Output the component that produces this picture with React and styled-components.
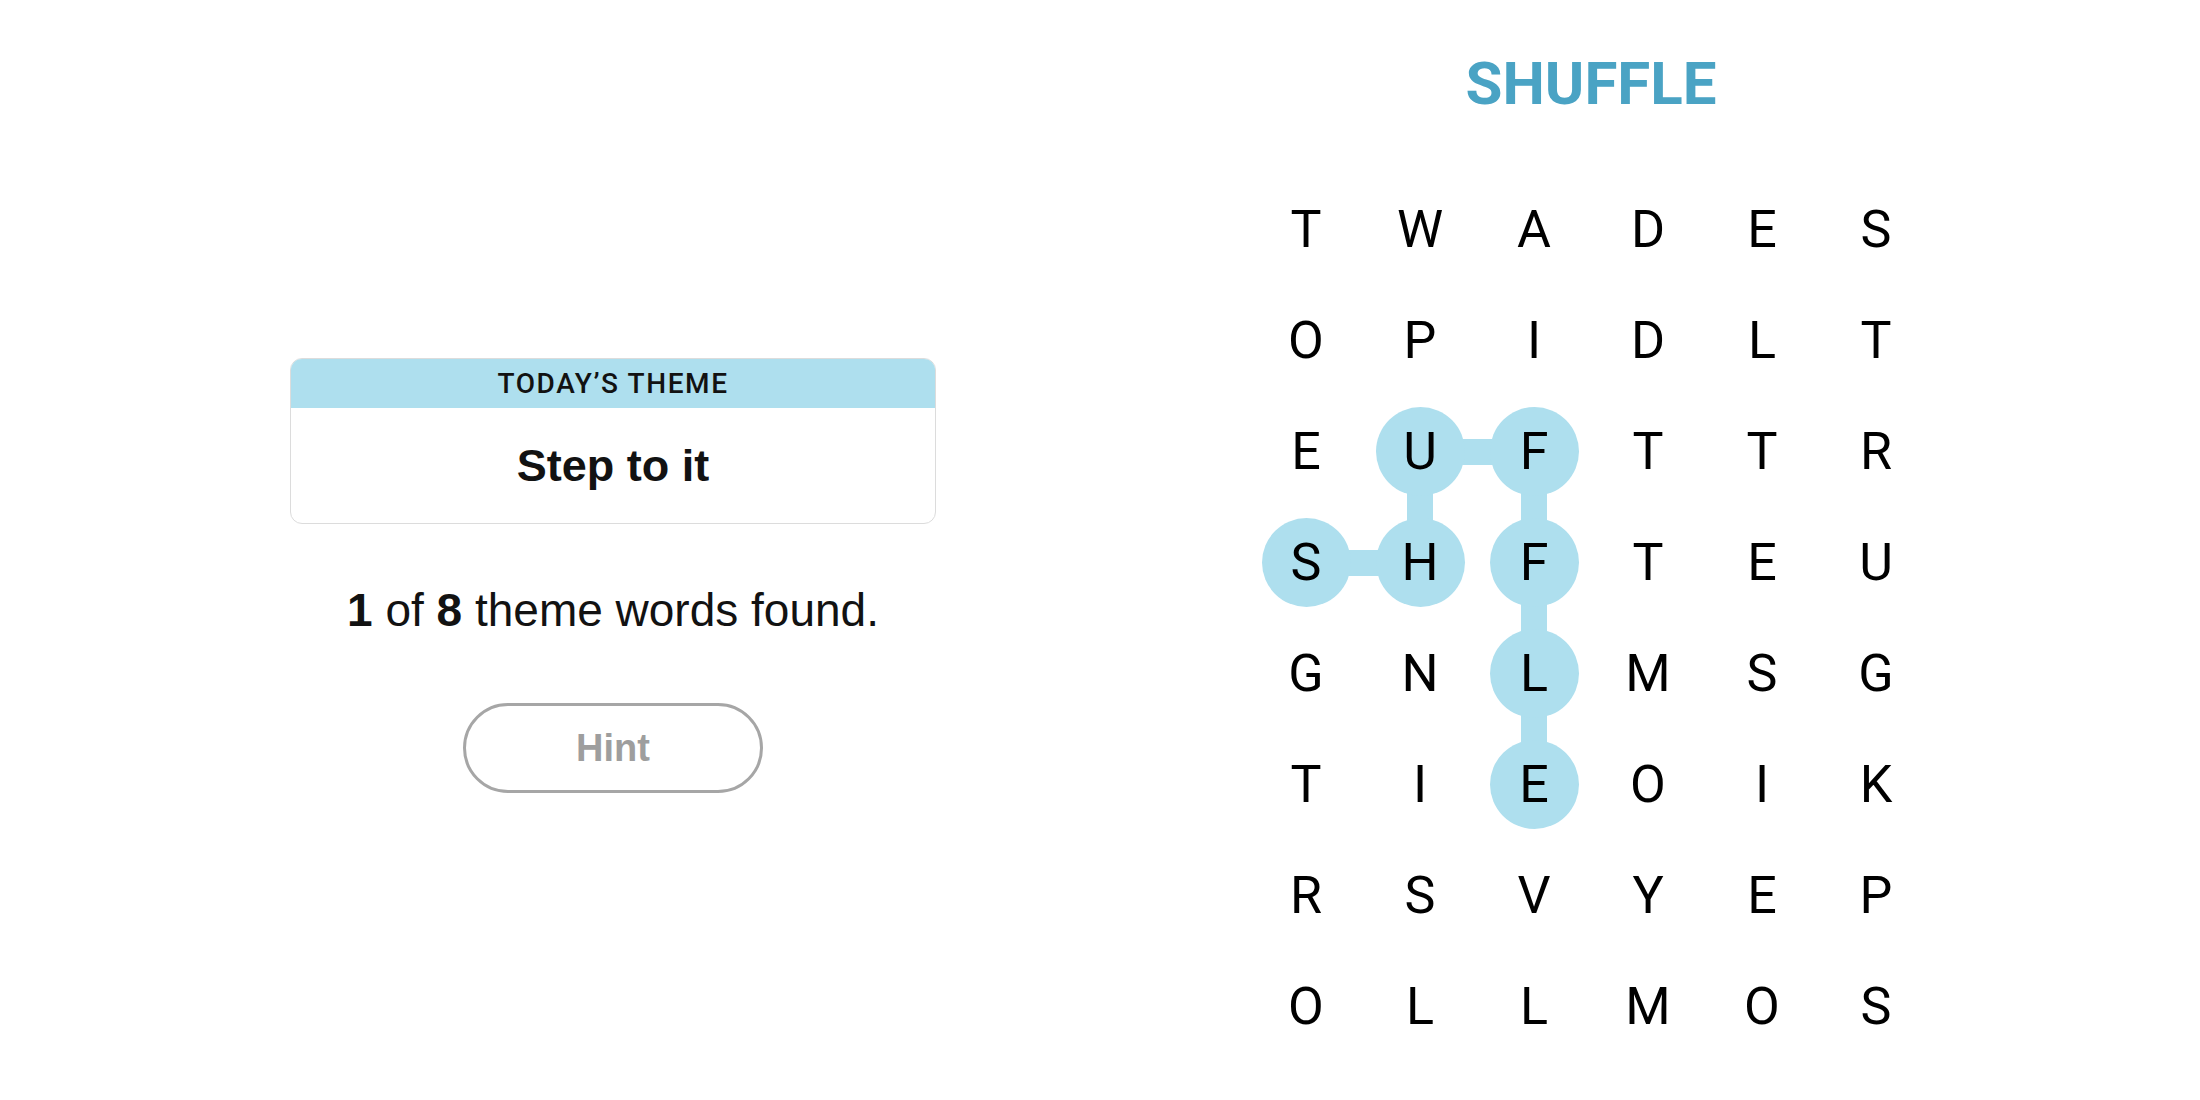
import React from "react";
import styled, { createGlobalStyle } from "styled-components";

const GlobalStyle = createGlobalStyle`
  html, body {
    margin: 0;
    padding: 0;
    background: #ffffff;
  }
  body {
    font-family: "Liberation Sans", Arial, sans-serif;
    color: #121212;
  }
`;

const Page = styled.main`
  display: flex;
  align-items: flex-start;
  gap: 313px;
  width: 2200px;
  height: 1100px;
  padding-left: 290px;
  box-sizing: border-box;
  overflow: hidden;
`;

const Sidebar = styled.section`
  width: 646px;
  display: flex;
  flex-direction: column;
  align-items: center;
  padding-top: 358px;
`;

const ThemeCard = styled.div`
  width: 100%;
  box-sizing: border-box;
  border: 1px solid #dcdcdc;
  border-radius: 12px;
  overflow: hidden;
`;

const ThemeLabel = styled.div`
  height: 49px;
  display: flex;
  align-items: center;
  justify-content: center;
  background: #aedfee;
  font-family: Roboto, "Liberation Sans", sans-serif;
  font-size: 28px;
  font-weight: 500;
  letter-spacing: 1.6px;
  text-transform: uppercase;
`;

const ThemeTitle = styled.div`
  height: 115px;
  display: flex;
  align-items: center;
  justify-content: center;
  font-size: 45px;
  font-weight: 700;
`;

const Progress = styled.p`
  margin: 63px 0 0;
  font-size: 46px;
  line-height: 1;
  text-align: center;

  b {
    font-weight: 700;
  }
`;

const HintButton = styled.button`
  margin-top: 70px;
  width: 300px;
  height: 90px;
  border: 3px solid #a6a6a6;
  border-radius: 45px;
  background: #ffffff;
  color: #9e9e9e;
  font-family: "Liberation Sans", Arial, sans-serif;
  font-size: 38px;
  font-weight: 700;
  cursor: default;
`;

const Board = styled.section`
  display: flex;
  flex-direction: column;
  align-items: center;
`;

const Spangram = styled.h1`
  margin: 54px 0 0;
  font-family: Roboto, "Liberation Sans", sans-serif;
  font-size: 60px;
  line-height: 60px;
  font-weight: 700;
  color: #4aa3c4;
`;

const LetterGrid = styled.div`
  margin-top: 60px;
  display: grid;
  grid-template-columns: repeat(6, 114px);
  grid-auto-rows: 111px;
`;

const Cell = styled.div`
  position: relative;
  display: flex;
  align-items: center;
  justify-content: center;

  &::before,
  &::after {
    content: "";
    position: absolute;
    left: 50%;
    top: 50%;
    background: #aedfee;
    z-index: 0;
  }

  &::before {
    display: ${(p) => (p.$right ? "block" : "none")};
    width: 100%;
    height: 26px;
    transform: translateY(-50%);
  }

  &::after {
    display: ${(p) => (p.$down ? "block" : "none")};
    width: 26px;
    height: 100%;
    transform: translateX(-50%);
  }
`;

const Letter = styled.span`
  position: relative;
  z-index: 1;
  width: 89px;
  height: 89px;
  display: flex;
  align-items: center;
  justify-content: center;
  border-radius: 50%;
  background: ${(p) => (p.$found ? "#aedfee" : "transparent")};
  font-family: Roboto, "Liberation Sans", sans-serif;
  font-size: 52px;
  line-height: 1;
  color: #000000;
`;

const rows = [
  "TWADES",
  "OPIDLT",
  "EUFTTR",
  "SHFTEU",
  "GNLMSG",
  "TIEOIK",
  "RSVYEP",
  "OLLMOS",
];

// found word path: S-H-U-F-F-L-E
const path = [
  [3, 0],
  [3, 1],
  [2, 1],
  [2, 2],
  [3, 2],
  [4, 2],
  [5, 2],
];

const key = (r, c) => `${r}-${c}`;
const found = new Set(path.map(([r, c]) => key(r, c)));
const rightLinks = new Set();
const downLinks = new Set();
for (let i = 1; i < path.length; i++) {
  const [r1, c1] = path[i - 1];
  const [r2, c2] = path[i];
  if (r1 === r2) rightLinks.add(key(r1, Math.min(c1, c2)));
  else downLinks.add(key(Math.min(r1, r2), c1));
}

const App = () => {
  return (
    <>
      <GlobalStyle />
      <Page>
        <Sidebar>
          <ThemeCard>
            <ThemeLabel>Today’s Theme</ThemeLabel>
            <ThemeTitle>Step to it</ThemeTitle>
          </ThemeCard>
          <Progress>
            <b>1</b> of <b>8</b> theme words found.
          </Progress>
          <HintButton>Hint</HintButton>
        </Sidebar>
        <Board>
          <Spangram>SHUFFLE</Spangram>
          <LetterGrid>
            {rows.map((row, r) =>
              row.split("").map((ch, c) => (
                <Cell
                  key={key(r, c)}
                  $right={rightLinks.has(key(r, c))}
                  $down={downLinks.has(key(r, c))}
                >
                  <Letter $found={found.has(key(r, c))}>{ch}</Letter>
                </Cell>
              ))
            )}
          </LetterGrid>
        </Board>
      </Page>
    </>
  );
};

export default App;
